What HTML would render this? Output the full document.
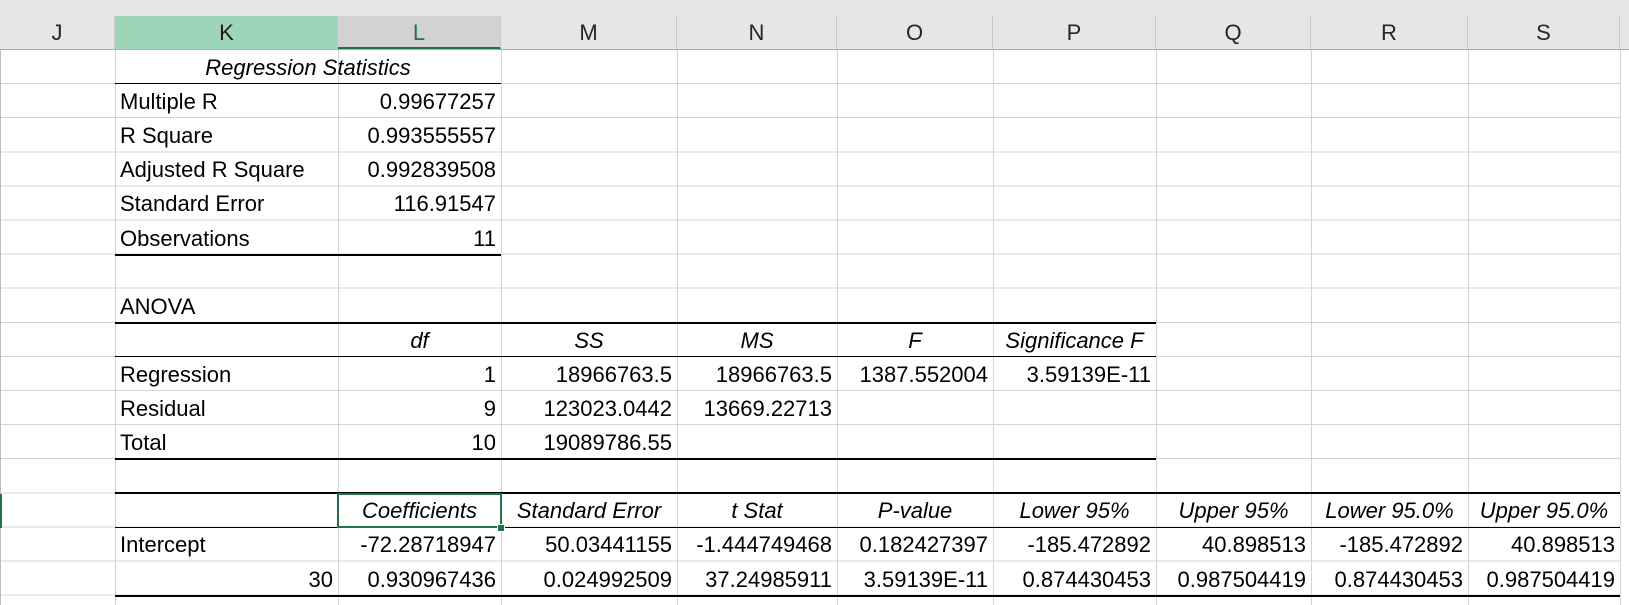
<!DOCTYPE html>
<html><head><meta charset="utf-8"><style>
html,body{margin:0;padding:0;}
body{width:1629px;height:605px;position:relative;overflow:hidden;background:#fff;font-family:"Liberation Sans",Arial,sans-serif;font-size:22px;color:#000;
background-image:repeating-linear-gradient(to bottom,transparent 0,transparent 33.1px,#d4d4d4 33.1px,#d4d4d4 34.1px);background-position:0 50px;background-repeat:no-repeat;background-size:1620px 560px;}
.hdr{position:absolute;left:0;top:0;width:1629px;height:50px;background:#e6e6e6;border-bottom:1px solid #ababab;box-sizing:border-box}
.h{position:absolute;top:16px;height:33px;line-height:33px;text-align:center;color:#262626;font-size:22px;border-right:1px solid #c6c6c6;box-sizing:border-box}
.v{position:absolute;top:50px;height:555px;width:1px;background:#d4d4d4}
.c{position:absolute;height:34px;line-height:36px;padding:0 5px;box-sizing:border-box;white-space:nowrap}
.r{text-align:right}.ce{text-align:center}.i{font-style:italic}
.bl{position:absolute;background:#000}
.k{left:115px;width:223px}.l{left:338px;width:163px}.m{left:501px;width:176px}.n{left:677px;width:160px}.o{left:837px;width:156px}.p{left:993px;width:163px}.q{left:1156px;width:155px}.rr{left:1311px;width:157px}.s{left:1468px;width:152px}
.kl{left:115px;width:386px}
.r1{top:50px}.r2{top:84.1px}.r3{top:118.2px}.r4{top:152.3px}.r5{top:186.4px}.r6{top:220.5px}.r8{top:288.7px}.r9{top:322.8px}.r10{top:356.9px}.r11{top:391px}.r12{top:425.1px}.r14{top:493.3px}.r15{top:527.4px}.r16{top:561.5px}
</style></head><body>
<div class="hdr"></div>
<div class="h" style="left:0;width:115px">J</div>
<div class="h" style="left:115px;width:223px;background:#9fd5b7;color:#1e1e1e;border-right:none">K</div>
<div class="h" style="left:338px;width:163px;background:#d2d2d2;border-bottom:2px solid #217346;color:#217346">L</div>
<div class="h" style="left:501px;width:176px">M</div>
<div class="h" style="left:677px;width:160px">N</div>
<div class="h" style="left:837px;width:156px">O</div>
<div class="h" style="left:993px;width:163px">P</div>
<div class="h" style="left:1156px;width:155px">Q</div>
<div class="h" style="left:1311px;width:157px">R</div>
<div class="h" style="left:1468px;width:152px">S</div>
<div class="v" style="left:0;background:#bdbdbd"></div>
<div class="v" style="left:115px"></div><div class="v" style="left:338px"></div><div class="v" style="left:501px"></div><div class="v" style="left:677px"></div><div class="v" style="left:837px"></div><div class="v" style="left:993px"></div><div class="v" style="left:1156px"></div><div class="v" style="left:1311px"></div><div class="v" style="left:1468px"></div><div class="v" style="left:1620px"></div>
<div style="position:absolute;left:0;top:494px;width:2px;height:34px;background:#217346"></div>

<div class="bl" style="left:115px;top:83px;width:386px;height:1px"></div>
<div class="bl" style="left:115px;top:253.5px;width:386px;height:2px"></div>
<div class="bl" style="left:115px;top:321.8px;width:1041px;height:2px"></div>
<div class="bl" style="left:115px;top:356px;width:1041px;height:1px"></div>
<div class="bl" style="left:115px;top:458.2px;width:1041px;height:2px"></div>
<div class="bl" style="left:115px;top:492.3px;width:1505px;height:2px"></div>
<div class="bl" style="left:115px;top:527px;width:1505px;height:1px"></div>
<div class="bl" style="left:115px;top:594.6px;width:1505px;height:2px"></div>
<div style="position:absolute;left:337px;top:493px;width:165px;height:35px;border:2px solid #217346;box-sizing:border-box"></div>
<div style="position:absolute;left:497px;top:524px;width:6px;height:6px;background:#217346;border:1px solid #fff"></div>

<div class="c kl r1 ce i">Regression Statistics</div>
<div class="c k r2">Multiple R</div><div class="c l r2 r">0.99677257</div>
<div class="c k r3">R Square</div><div class="c l r3 r">0.993555557</div>
<div class="c k r4">Adjusted R Square</div><div class="c l r4 r">0.992839508</div>
<div class="c k r5">Standard Error</div><div class="c l r5 r">116.91547</div>
<div class="c k r6">Observations</div><div class="c l r6 r">11</div>

<div class="c k r8">ANOVA</div>
<div class="c l r9 ce i">df</div><div class="c m r9 ce i">SS</div><div class="c n r9 ce i">MS</div><div class="c o r9 ce i">F</div><div class="c p r9 ce i">Significance F</div>
<div class="c k r10">Regression</div><div class="c l r10 r">1</div><div class="c m r10 r">18966763.5</div><div class="c n r10 r">18966763.5</div><div class="c o r10 r">1387.552004</div><div class="c p r10 r">3.59139E-11</div>
<div class="c k r11">Residual</div><div class="c l r11 r">9</div><div class="c m r11 r">123023.0442</div><div class="c n r11 r">13669.22713</div>
<div class="c k r12">Total</div><div class="c l r12 r">10</div><div class="c m r12 r">19089786.55</div>

<div class="c l r14 ce i">Coefficients</div><div class="c m r14 ce i">Standard Error</div><div class="c n r14 ce i">t Stat</div><div class="c o r14 ce i">P-value</div><div class="c p r14 ce i">Lower 95%</div><div class="c q r14 ce i">Upper 95%</div><div class="c rr r14 ce i">Lower 95.0%</div><div class="c s r14 ce i">Upper 95.0%</div>
<div class="c k r15">Intercept</div><div class="c l r15 r">-72.28718947</div><div class="c m r15 r">50.03441155</div><div class="c n r15 r">-1.444749468</div><div class="c o r15 r">0.182427397</div><div class="c p r15 r">-185.472892</div><div class="c q r15 r">40.898513</div><div class="c rr r15 r">-185.472892</div><div class="c s r15 r">40.898513</div>
<div class="c k r16 r">30</div><div class="c l r16 r">0.930967436</div><div class="c m r16 r">0.024992509</div><div class="c n r16 r">37.24985911</div><div class="c o r16 r">3.59139E-11</div><div class="c p r16 r">0.874430453</div><div class="c q r16 r">0.987504419</div><div class="c rr r16 r">0.874430453</div><div class="c s r16 r">0.987504419</div>
</body></html>
